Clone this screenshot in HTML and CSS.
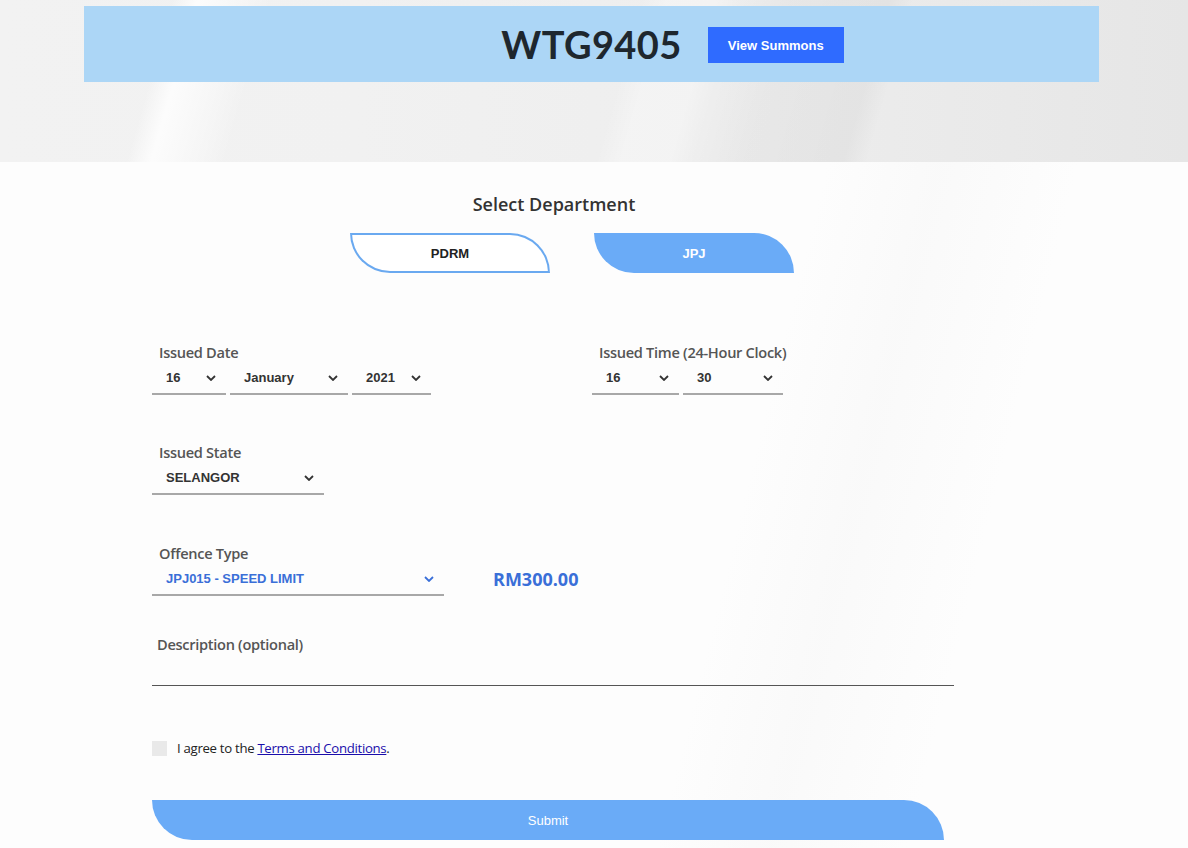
FILE: index.html
```html
<!DOCTYPE html>
<html lang="en">
<head>
<meta charset="utf-8">
<title>Summons</title>
<link rel="stylesheet" href="styles.css">
</head>
<body>
<header class="hero">
  <div class="banner">
    <div class="banner-side"></div>
    <h1 class="plate">WTG9405</h1>
    <div class="banner-side banner-right">
      <button class="view-btn" type="button">View Summons</button>
    </div>
  </div>
</header>

<main class="content">
  <h2 class="dept-title">Select Department</h2>
  <div class="dept-row">
    <button class="dept dept-outline" type="button">PDRM</button>
    <button class="dept dept-filled" type="button">JPJ</button>
  </div>

  <form class="form">
    <div class="row row-date">
      <div class="field">
        <label class="label">Issued Date</label>
        <div class="selects">
          <div class="select w-day"><span class="val">16</span><svg class="chev" viewBox="0 0 10 6"><path d="M1 1l4 4 4-4" fill="none" stroke="#333" stroke-width="1.8"/></svg></div>
          <div class="select w-month"><span class="val">January</span><svg class="chev" viewBox="0 0 10 6"><path d="M1 1l4 4 4-4" fill="none" stroke="#333" stroke-width="1.8"/></svg></div>
          <div class="select w-year"><span class="val">2021</span><svg class="chev" viewBox="0 0 10 6"><path d="M1 1l4 4 4-4" fill="none" stroke="#333" stroke-width="1.8"/></svg></div>
        </div>
      </div>
      <div class="field field-time">
        <label class="label">Issued Time (24-Hour Clock)</label>
        <div class="selects">
          <div class="select w-hour"><span class="val">16</span><svg class="chev" viewBox="0 0 10 6"><path d="M1 1l4 4 4-4" fill="none" stroke="#333" stroke-width="1.8"/></svg></div>
          <div class="select w-min"><span class="val">30</span><svg class="chev" viewBox="0 0 10 6"><path d="M1 1l4 4 4-4" fill="none" stroke="#333" stroke-width="1.8"/></svg></div>
        </div>
      </div>
    </div>

    <div class="row row-state">
      <div class="field">
        <label class="label">Issued State</label>
        <div class="selects">
          <div class="select w-state"><span class="val">SELANGOR</span><svg class="chev" viewBox="0 0 10 6"><path d="M1 1l4 4 4-4" fill="none" stroke="#333" stroke-width="1.8"/></svg></div>
        </div>
      </div>
    </div>

    <div class="row row-offence">
      <div class="field">
        <label class="label">Offence Type</label>
        <div class="selects">
          <div class="select w-offence blue"><span class="val">JPJ015 - SPEED LIMIT</span><svg class="chev" viewBox="0 0 10 6"><path d="M1 1l4 4 4-4" fill="none" stroke="#3a6fd8" stroke-width="1.8"/></svg></div>
        </div>
      </div>
      <div class="amount">RM300.00</div>
    </div>

    <div class="row row-desc">
      <label class="label label-desc">Description (optional)</label>
      <div class="desc-input"></div>
    </div>

    <div class="agree">
      <span class="checkbox"></span>
      <span class="agree-text">I agree to the <a href="#" class="link">Terms and Conditions</a>.</span>
    </div>

    <button class="submit" type="button">Submit</button>
  </form>
</main>
</body>
</html>
```

FILE: styles.css
```css
* { box-sizing: border-box; }

html, body {
  margin: 0;
  padding: 0;
}

body {
  width: 1188px;
  height: 848px;
  overflow: hidden;
  font-family: "Liberation Sans", Arial, sans-serif;
  background:
    linear-gradient(104deg, rgba(255,255,255,0) 0%, rgba(255,255,255,0) 62%, rgba(246,246,246,0.5) 70%, rgba(255,255,255,0) 80%),
    #fdfdfd;
}

.hero {
  height: 162px;
  padding-top: 6px;
  background:
    linear-gradient(106deg, rgba(255,255,255,0) 0%, rgba(255,255,255,0) 14%, rgba(255,255,255,0.8) 16%, rgba(255,255,255,0.3) 20%, rgba(255,255,255,0) 22%, rgba(255,255,255,0) 52%, rgba(255,255,255,0.3) 54%, rgba(255,255,255,0.3) 58%, rgba(255,255,255,0) 60%, rgba(0,0,0,0.025) 64%, rgba(0,0,0,0.035) 72%, rgba(255,255,255,0) 74%, rgba(255,255,255,0) 100%),
    linear-gradient(90deg, #f2f2f2 0%, #f1f1f1 30%, #eeeeee 60%, #e9e9e9 85%, #e6e6e6 100%);
}

.banner {
  width: 1015px;
  height: 76px;
  margin-left: 84px;
  background: #acd6f6;
  display: grid;
  grid-template-columns: 1fr auto 1fr;
  align-items: center;
}

.banner-right {
  display: flex;
  padding-left: 26px;
}

.plate {
  margin: 0;
  font-family: Lato, "Open Sans", sans-serif;
  font-weight: 700;
  font-size: 38px;
  letter-spacing: 0.4px;
  color: #1e272e;
}

.view-btn {
  border: 0;
  width: 136px;
  height: 36px;
  background: #2f6bff;
  color: #fff;
  font-family: "Liberation Sans", Arial, sans-serif;
  font-weight: 700;
  font-size: 13px;
  margin-top: 2px;
}

.content {
  padding-top: 30px;
}

.dept-title {
  margin: 0 0 0 -80px;
  text-align: center;
  font-family: "Open Sans", sans-serif;
  font-weight: 600;
  font-size: 18px;
  line-height: 24px;
  color: #333;
}

.dept-row {
  display: flex;
  gap: 44px;
  margin-left: 350px;
  margin-top: 17px;
}

.dept {
  width: 200px;
  height: 40px;
  border-radius: 0 40px 0 40px;
  font-family: "Liberation Sans", Arial, sans-serif;
  font-weight: 700;
  font-size: 13px;
  cursor: pointer;
}

.dept-outline {
  background: #fff;
  border: 2px solid #6aa9f0;
  color: #222;
}

.dept-filled {
  background: #6aabf7;
  border: 0;
  color: #fff;
}

.form {
  margin-left: 152px;
  width: 802px;
  margin-top: 70px;
}

.row {
  display: flex;
}

.row-date {
  gap: 161px;
}

.field {
  display: flex;
  flex-direction: column;
}

.label {
  display: block;
  font-family: "Open Sans", sans-serif;
  font-weight: 600;
  font-size: 14.6px;
  line-height: 18px;
  color: #555;
  padding-left: 7px;
  letter-spacing: -0.3px;
}

.selects {
  display: flex;
  gap: 4px;
  margin-top: 1px;
}

.select {
  position: relative;
  height: 33px;
  border-bottom: 2px solid #a8a8a8;
  display: flex;
  align-items: center;
  padding-left: 14px;
  font-size: 13px;
  font-weight: 700;
  color: #333;
}

.select .val {
  line-height: 16px;
}

.chev {
  position: absolute;
  right: 10px;
  top: 13px;
  width: 10px;
  height: 6px;
}

.w-day { width: 74px; }
.w-month { width: 118px; }
.w-year { width: 79px; }
.w-hour { width: 87px; }
.w-min { width: 100px; }
.w-state { width: 172px; }
.w-offence { width: 292px; }

.blue { color: #3a6fd8; }

.row-state {
  margin-top: 48px;
}

.row-offence {
  margin-top: 49px;
  align-items: flex-end;
}

.amount {
  margin-left: 49px;
  margin-bottom: 4px;
  font-family: "Open Sans", sans-serif;
  font-weight: 700;
  font-size: 18px;
  color: #3a6fd8;
  line-height: 26px;
}

.row-desc {
  flex-direction: column;
  margin-top: 39px;
}

.label-desc {
  padding-left: 5px;
}

.desc-input {
  height: 33px;
  border-bottom: 1px solid #555;
}

.agree {
  display: flex;
  align-items: center;
  margin-top: 54px;
  height: 16px;
}

.checkbox {
  width: 15px;
  height: 15px;
  background: #e9e9e9;
}

.agree-text {
  margin-left: 10px;
  font-family: "Open Sans", sans-serif;
  font-size: 13.2px;
  color: #222;
  letter-spacing: -0.3px;
}

.link {
  color: #1a0dab;
  text-decoration: underline;
}

.submit {
  display: block;
  margin-top: 44px;
  width: 792px;
  height: 40px;
  border: 0;
  border-radius: 0 40px 0 40px;
  background: #6aabf7;
  color: #fff;
  font-family: "Liberation Sans", Arial, sans-serif;
  font-size: 13px;
}
```
